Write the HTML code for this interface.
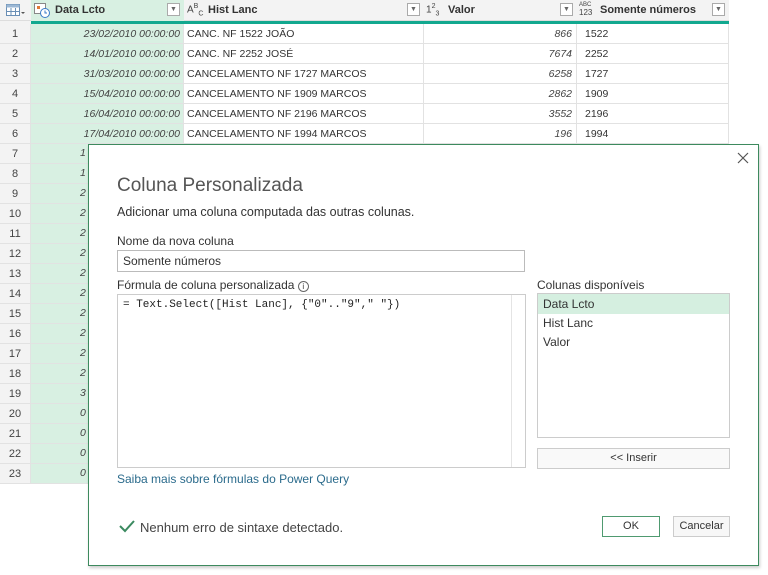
<!DOCTYPE html>
<html><head><meta charset="utf-8"><style>
*{box-sizing:border-box;margin:0;padding:0}
body{width:768px;height:575px;background:#fff;font-family:"Liberation Sans",sans-serif;position:relative;overflow:hidden;color:#333}
.abs{position:absolute}
.hdr{top:0;height:21px;background:#f3f3f3;border-bottom:1px solid #ddd}
.cell{position:absolute;height:20px;font-size:10.5px;line-height:20px;white-space:nowrap;overflow:hidden;border-bottom:1px solid #e2e2e2;border-right:1px solid #e2e2e2}
.dd{position:absolute;top:3px;width:13px;height:13px;border:1px solid #aaa;background:#fff;font-size:7px;line-height:11px;text-align:center;color:#666}
.lbl{position:absolute;font-size:12px;color:#333}
</style></head><body>
<div class="abs hdr" style="left:0;width:729px"></div>
<div class="abs" style="left:31px;top:0;width:153px;height:21px;background:#d8f0e2"></div>
<div class="abs" style="left:0;top:21px;width:31px;height:3px;background:#f3f3f3"></div>
<div class="abs" style="left:31px;top:21px;width:698px;height:3px;background:#12a88f"></div>
<svg class="abs" style="left:6px;top:4px" width="20" height="13"><rect x="0.5" y="0.5" width="13" height="11" fill="#fff" stroke="#6a8fb5"/><rect x="0.5" y="0.5" width="13" height="3" fill="#9bb7d4"/><path d="M0 7.5H14M5 4V12M9.5 4V12" stroke="#6a8fb5"/><path d="M15 8l2 2 2-2z" fill="#555"/></svg>
<svg class="abs" style="left:34px;top:2px" width="17" height="17"><rect x="0.5" y="1.5" width="11" height="10" fill="#fff" stroke="#888"/><rect x="3" y="4" width="3" height="3" fill="#e07b39"/><circle cx="11" cy="11" r="4.5" fill="#fff" stroke="#3a7bc8"/><path d="M11 8.5V11H13" stroke="#3a7bc8" fill="none"/></svg>
<div class="abs" style="left:55px;top:4px;font-size:11px;font-weight:bold;color:#333">Data Lcto</div>
<div class="dd" style="left:167px">▼</div>
<div class="abs" style="left:187px;top:3px;font-size:10px;color:#444">A<sup style="font-size:7px">B</sup><sub style="font-size:7px">C</sub></div>
<div class="abs" style="left:208px;top:4px;font-size:11px;font-weight:bold;color:#333">Hist Lanc</div>
<div class="dd" style="left:407px">▼</div>
<div class="abs" style="left:426px;top:3px;font-size:10px;color:#444">1<sup style="font-size:7px">2</sup><sub style="font-size:7px">3</sub></div>
<div class="abs" style="left:448px;top:4px;font-size:11px;font-weight:bold;color:#333">Valor</div>
<div class="dd" style="left:560px">▼</div>
<div class="abs" style="left:579px;top:2px;font-size:6px;line-height:7px;color:#444">ABC<br><span style="font-size:8px">123</span></div>
<div class="abs" style="left:600px;top:4px;font-size:11px;font-weight:bold;color:#333">Somente números</div>
<div class="dd" style="left:712px">▼</div>
<div id="rows"></div>
<script>
var d=[["23/02/2010 00:00:00","CANC. NF 1522 JOÃO","866","1522"],["14/01/2010 00:00:00","CANC. NF 2252 JOSÉ","7674","2252"],["31/03/2010 00:00:00","CANCELAMENTO NF 1727 MARCOS","6258","1727"],["15/04/2010 00:00:00","CANCELAMENTO NF 1909 MARCOS","2862","1909"],["16/04/2010 00:00:00","CANCELAMENTO NF 2196 MARCOS","3552","2196"],["17/04/2010 00:00:00","CANCELAMENTO NF 1994 MARCOS","196","1994"]];
var firsts=["1","1","2","2","2","2","2","2","2","2","2","2","3","0","0","0","0"];
var h="";
for(var i=0;i<23;i++){var t=24+i*20;
h+='<div class="cell" style="left:0;top:'+t+'px;width:31px;background:#f3f3f3;text-align:center;color:#444;font-size:11px">'+(i+1)+'</div>';
var dv=i<6?d[i][0]:"";
h+='<div class="cell" style="left:31px;top:'+t+'px;width:153px;background:#d8f0e2;text-align:right;padding-right:3px;font-style:italic;color:#444">'+dv+'</div>';
if(i<6){h+='<div class="cell" style="left:184px;top:'+t+'px;width:240px;padding-left:3px">'+d[i][1]+'</div>';
h+='<div class="cell" style="left:424px;top:'+t+'px;width:153px;text-align:right;padding-right:4px;font-style:italic;color:#444">'+d[i][2]+'</div>';
h+='<div class="cell" style="left:577px;top:'+t+'px;width:152px;padding-left:8px">'+d[i][3]+'</div>';}
else{h+='<div class="abs" style="left:80px;top:'+(t+3)+'px;font-size:10.5px;font-style:italic;color:#444">'+firsts[i-6]+'</div>';}
}
document.getElementById("rows").innerHTML=h;
</script>
<div class="abs" style="left:88px;top:144px;width:671px;height:422px;background:#fff;border:1px solid #3d8a5e;box-shadow:1px 2px 3px rgba(0,0,0,.2)">
<svg class="abs" style="left:648px;top:7px" width="12" height="12"><path d="M1 1L11 11M11 1L1 11" stroke="#555" stroke-width="1.2"/></svg>
<div class="abs" style="left:28px;top:30px;font-size:19px;color:#555">Coluna Personalizada</div>
<div class="abs" style="left:28px;top:60px;font-size:12.5px;color:#333">Adicionar uma coluna computada das outras colunas.</div>
<div class="lbl" style="left:28px;top:89px">Nome da nova coluna</div>
<div class="abs" style="left:28px;top:105px;width:408px;height:22px;border:1px solid #bbb;font-size:12px;line-height:20px;padding-left:5px">Somente números</div>
<div class="lbl" style="left:28px;top:133px">Fórmula de coluna personalizada <span style="display:inline-block;width:11px;height:11px;border:1px solid #666;border-radius:50%;font-size:8px;line-height:9px;text-align:center">i</span></div>
<div class="abs" style="left:28px;top:149px;width:409px;height:174px;border:1px solid #ccc">
<div class="abs" style="left:5px;top:4px;font-family:'Liberation Mono',monospace;font-size:11px;color:#222">= Text.Select([Hist Lanc], {"0".."9"," "})</div>
<div class="abs" style="left:393px;top:0;width:1px;height:172px;background:#e4e4e4"></div>
</div>
<div class="abs" style="left:28px;top:327px;font-size:12px;color:#2b6b8c">Saiba mais sobre fórmulas do Power Query</div>
<div class="lbl" style="left:448px;top:133px">Colunas disponíveis</div>
<div class="abs" style="left:448px;top:148px;width:193px;height:145px;border:1px solid #ccc">
<div style="height:20px;background:#d5efe0;font-size:12px;line-height:20px;padding-left:5px">Data Lcto</div>
<div style="height:19px;font-size:12px;line-height:19px;padding-left:5px">Hist Lanc</div>
<div style="height:19px;font-size:12px;line-height:19px;padding-left:5px">Valor</div>
</div>
<div class="abs" style="left:448px;top:303px;width:193px;height:21px;border:1px solid #ccc;background:#f9f9f9;font-size:11px;line-height:19px;text-align:center">&lt;&lt; Inserir</div>
<svg class="abs" style="left:30px;top:374px" width="16" height="14"><path d="M1 7L6 12L15 2" stroke="#3b8a60" stroke-width="2" fill="none"/></svg>
<div class="abs" style="left:51px;top:375px;font-size:13px;color:#444">Nenhum erro de sintaxe detectado.</div>
<div class="abs" style="left:513px;top:371px;width:58px;height:21px;border:1px solid #4f9a70;background:#fff;font-size:11px;line-height:19px;text-align:center">OK</div>
<div class="abs" style="left:584px;top:371px;width:57px;height:21px;border:1px solid #ccc;background:#f7f7f7;font-size:11px;line-height:19px;text-align:center">Cancelar</div>
</div>
</body></html>
